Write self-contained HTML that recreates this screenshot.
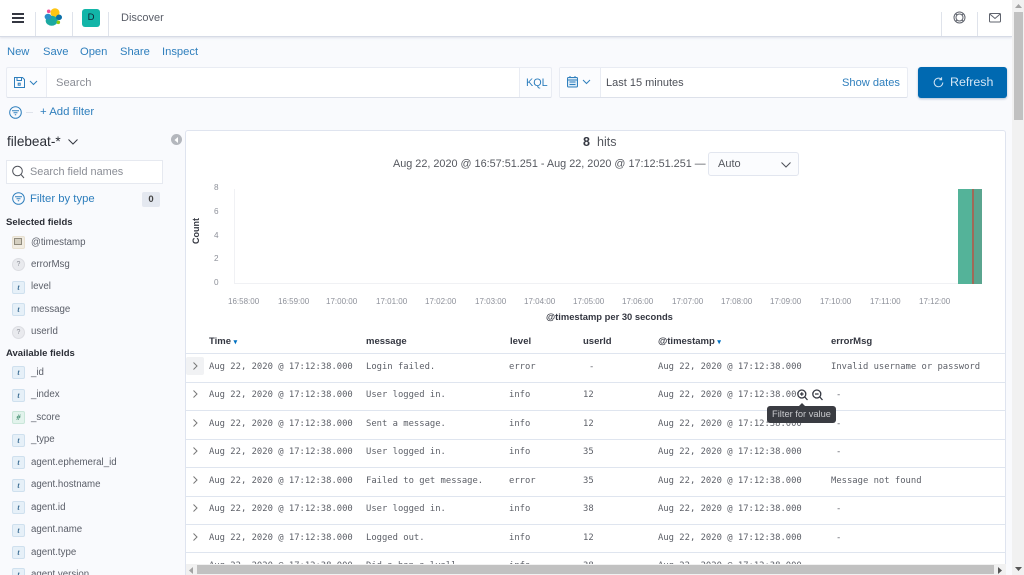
<!DOCTYPE html>
<html><head><meta charset="utf-8"><style>
html,body{margin:0;padding:0;width:1024px;height:575px;overflow:hidden;background:#f9fafd}
body{font-family:"Liberation Sans",sans-serif;color:#343741;position:relative}
.a{position:absolute}
.t{position:absolute;white-space:nowrap;line-height:14px}
.l{color:#2f7fbd;font-size:11.2px}
.f{position:absolute;left:31px;font-size:9.7px;color:#5a5e68;white-space:nowrap;line-height:12px;margin-top:1px}
.h{position:absolute;left:6px;font-size:9.5px;font-weight:bold;color:#2b2e36;line-height:12px;white-space:nowrap;margin-top:1px}
.ic{position:absolute;left:12px;width:11px;height:11px;border-radius:2px;background:#e6f0f8;border:.5px solid #cfe0ee;font:italic bold 8px/11px "Liberation Serif",serif;color:#3f6f95;text-align:center}
.ic.q{border-radius:50%;background:#e9eaee;border-color:#dcdde2;color:#8a8d96;font:7px/11px "Liberation Sans",sans-serif}
.ic.n{background:#e2f3ec;border-color:#c9e6d9;color:#3d8a6c}
.ic.d{background:#f1ece2;border-color:#e8e0d0}
.m{position:absolute;font:8.85px/12px "DejaVu Sans Mono",monospace;color:#5d6068;white-space:nowrap}
.th{position:absolute;top:336px;font-size:9.5px;font-weight:bold;color:#343741;line-height:12px;white-space:nowrap}
.rl{position:absolute;left:186px;width:820px;height:1px;background:#dfe5ef}
.x{position:absolute;font-size:8px;color:#8d9099;line-height:10px;top:297px;white-space:nowrap}
.y{position:absolute;font-size:8.2px;color:#8d9099;line-height:10px;left:214px}
svg{position:absolute;overflow:visible}
</style></head><body>

<!-- header -->
<div class="a" style="left:0;top:0;width:1012px;height:36px;background:#fff;border-bottom:1px solid #d6dbe6;box-shadow:0 1px 2px rgba(150,160,185,.25)"></div>
<div class="a" style="left:12px;top:13px;width:12px;height:1.5px;background:#343741"></div>
<div class="a" style="left:12px;top:17px;width:12px;height:1.5px;background:#343741"></div>
<div class="a" style="left:12px;top:21px;width:12px;height:1.5px;background:#343741"></div>
<div class="a" style="left:35px;top:12px;width:1px;height:24px;background:#dfe3eb"></div>
<div class="a" style="left:72px;top:12px;width:1px;height:24px;background:#dfe3eb"></div>
<div class="a" style="left:108px;top:12px;width:1px;height:24px;background:#dfe3eb"></div>
<div class="a" style="left:941px;top:12px;width:1px;height:24px;background:#dfe3eb"></div>
<div class="a" style="left:977px;top:12px;width:1px;height:24px;background:#dfe3eb"></div>
<svg style="left:44px;top:7px" width="20" height="20" viewBox="0 0 20 20">
<circle cx="11" cy="5.7" r="4.5" fill="#fec514"/><ellipse cx="7.7" cy="13.7" rx="6" ry="5" fill="#1ba9a0"/>
<ellipse cx="4" cy="9.7" rx="3.4" ry="3" fill="#2a8fc9"/><circle cx="4.7" cy="4.3" r="1.8" fill="#f04e98"/>
<ellipse cx="15" cy="10.3" rx="3" ry="2.8" fill="#0a6fa8"/><circle cx="14.3" cy="15.3" r="1.8" fill="#93c90e"/></svg>
<div class="a" style="left:82px;top:9px;width:18px;height:18px;border-radius:3px;background:#12b5a8;color:#123;font-size:9.5px;line-height:18px;text-align:center">D</div>
<div class="t" style="left:121px;top:11px;font-size:11px;color:#5a5e68">Discover</div>
<svg style="left:953px;top:11px" width="13" height="13" viewBox="0 0 13 13" fill="none" stroke="#5f636d" stroke-width="1"><circle cx="6.5" cy="6.5" r="5.5"/><circle cx="6.5" cy="6.5" r="3.5"/><path d="M2.5 2.5l1.6 1.6M10.5 2.5L8.9 4.1M2.5 10.5l1.6-1.6M10.5 10.5L8.9 8.9"/></svg>
<svg style="left:989px;top:13px" width="12" height="10" viewBox="0 0 12 10" fill="none" stroke="#5f636d" stroke-width="1"><rect x=".5" y=".5" width="11" height="8.5" rx="1"/><path d="M.8 1l5.2 4.5L11.2 1"/></svg>

<!-- scrollbar -->
<div class="a" style="left:1012px;top:0;width:12px;height:575px;background:#f1f1f1"></div>
<div class="a" style="left:1014px;top:12px;width:9px;height:108px;background:#c1c1c1"></div>
<svg style="left:1015px;top:4px" width="7" height="4"><path d="M3.5 0L7 4H0z" fill="#a3a3a3"/></svg>
<svg style="left:1015px;top:567px" width="7" height="4"><path d="M0 0h7L3.5 4z" fill="#555"/></svg>

<!-- top menu -->
<div class="t l" style="left:7px;top:45px">New</div>
<div class="t l" style="left:43px;top:45px">Save</div>
<div class="t l" style="left:80px;top:45px">Open</div>
<div class="t l" style="left:120px;top:45px">Share</div>
<div class="t l" style="left:162px;top:45px">Inspect</div>

<!-- search -->
<div class="a" style="left:6px;top:67px;width:546px;height:31px;box-sizing:border-box;background:#fbfcfe;border:1px solid #e9ecf3;border-bottom:1px solid #dde1ea;border-radius:2px"></div>
<div class="a" style="left:46px;top:68px;width:474px;height:29px;background:#fff;border-left:1px solid #e9ecf3;border-right:1px solid #e9ecf3;box-sizing:border-box"></div>
<svg style="left:14px;top:76px" width="26" height="13" viewBox="0 0 26 13" fill="none" stroke="#2f7fbd"><path d="M.5 1.5h8l2 2v8h-10zM3 1.5v3h4.5v-3"/><rect x="4.2" y="7.2" width="2" height="2"/><path d="M16 5l3.5 3.5L23 5" stroke-width="1"/></svg>
<div class="t" style="left:56px;top:76px;font-size:11.2px;color:#8a8d95">Search</div>
<div class="t l" style="left:526px;top:76px;font-size:10.8px">KQL</div>

<div class="a" style="left:559px;top:67px;width:349px;height:31px;box-sizing:border-box;background:#fff;border:1px solid #e9ecf3;border-bottom:1px solid #dde1ea;border-radius:2px"></div>
<div class="a" style="left:560px;top:68px;width:40px;height:29px;background:#fbfcfe;border-right:1px solid #e9ecf3"></div>
<svg style="left:567px;top:76px" width="26" height="12" viewBox="0 0 26 12" fill="none" stroke="#2f7fbd"><rect x=".5" y="1.5" width="10" height="9.5" rx="1" fill="#dcebf6"/><path d="M.5 4h10M3 0v2M8 0v2M2.5 6h6M2.5 8.5h6"/><path d="M16 4l3.5 3.5L23 4"/></svg>
<div class="t" style="left:606px;top:76px;font-size:11px;color:#4d5058">Last 15 minutes</div>
<div class="t l" style="left:842px;top:76px;font-size:11.1px">Show dates</div>

<div class="a" style="left:918px;top:67px;width:89px;height:31px;border-radius:3px;background:#0069b1;box-shadow:0 1px 2px rgba(0,60,120,.3)"></div>
<svg style="left:933px;top:77px" width="11" height="11" viewBox="0 0 11 11" fill="none" stroke="#cfe3f3" stroke-width="1"><path d="M9.8 5.5a4.3 4.3 0 1 1-1.5-3.3M8.6.3v2.4H6.3"/></svg>
<div class="t" style="left:950px;top:75px;font-size:12.4px;color:#d4e6f4">Refresh</div>

<!-- filter -->
<svg style="left:9px;top:106px" width="13" height="13" viewBox="0 0 13 13" fill="none" stroke="#2f7fbd"><circle cx="6.5" cy="6.5" r="5.8"/><path d="M3 4.8h7M4.5 6.8h4M5.8 8.8h1.4"/></svg>
<div class="a" style="left:26px;top:112px;width:7px;height:1px;background:#dfe3eb"></div>
<div class="t l" style="left:40px;top:105px;font-size:11.4px">+ Add filter</div>

<!-- sidebar -->
<div class="t" style="left:7px;top:135px;font-size:13.6px;color:#2b2e36">filebeat-*</div>
<svg style="left:68px;top:139px" width="10" height="6" fill="none" stroke="#343741"><path d="M.5.5L5 5 9.5.5"/></svg>
<div class="a" style="left:171px;top:134px;width:11px;height:11px;border-radius:50%;background:#b4b7bd"></div>
<svg style="left:174px;top:136.5px" width="5" height="6"><path d="M4 0v6L.5 3z" fill="#fff"/></svg>
<div class="a" style="left:6px;top:160px;width:157px;height:24px;box-sizing:border-box;background:#fff;border:1px solid #e6e9f0"></div>
<svg style="left:12px;top:165px" width="13" height="14" fill="none" stroke="#50535b" stroke-width="1"><circle cx="5.5" cy="6" r="4.8"/><path d="M9 9.5l3 3.5"/></svg>
<div class="t" style="left:30px;top:165px;font-size:10.9px;color:#8a8d95">Search field names</div>
<svg style="left:12px;top:192px" width="13" height="13" viewBox="0 0 13 13" fill="none" stroke="#2f7fbd"><circle cx="6.5" cy="6.5" r="5.8"/><path d="M3 4.8h7M4.5 6.8h4M5.8 8.8h1.4"/></svg>
<div class="t l" style="left:30px;top:192px;font-size:11.3px">Filter by type</div>
<div class="a" style="left:142px;top:192px;width:18px;height:15px;background:#e4e8f0;border-radius:2px;font-size:9.5px;font-weight:bold;line-height:15px;text-align:center;color:#444">0</div>

<div class="h" style="top:216px">Selected fields</div>
<div class="ic d" style="top:236px"></div><div class="a" style="left:14px;top:238px;background:#d5cfc0;border:1px solid #8f8a7c;box-sizing:border-box;width:8px;height:7px"></div><div class="f" style="top:236px">@timestamp</div>
<div class="ic q" style="top:258px">?</div><div class="f" style="top:258px">errorMsg</div>
<div class="ic" style="top:281px">t</div><div class="f" style="top:280px">level</div>
<div class="ic" style="top:303px">t</div><div class="f" style="top:303px">message</div>
<div class="ic q" style="top:326px">?</div><div class="f" style="top:325px">userId</div>
<div class="h" style="top:347px">Available fields</div>
<div class="ic" style="top:366px">t</div><div class="f" style="top:366px">_id</div>
<div class="ic" style="top:389px">t</div><div class="f" style="top:388px">_index</div>
<div class="ic n" style="top:411px">#</div><div class="f" style="top:411px">_score</div>
<div class="ic" style="top:434px">t</div><div class="f" style="top:433px">_type</div>
<div class="ic" style="top:456px">t</div><div class="f" style="top:456px">agent.ephemeral_id</div>
<div class="ic" style="top:479px">t</div><div class="f" style="top:478px">agent.hostname</div>
<div class="ic" style="top:501px">t</div><div class="f" style="top:501px">agent.id</div>
<div class="ic" style="top:524px">t</div><div class="f" style="top:523px">agent.name</div>
<div class="ic" style="top:546px">t</div><div class="f" style="top:546px">agent.type</div>
<div class="ic" style="top:568px">t</div><div class="f" style="top:568px">agent.version</div>

<!-- main panel -->
<div class="a" style="left:185px;top:130px;width:821px;height:445px;box-sizing:border-box;background:#fff;border:1px solid #dfe4ef;border-bottom:0;border-radius:3px 3px 0 0"></div>
<div class="t" style="left:583px;top:135px;font-size:12.5px;font-weight:bold;color:#343741">8</div>
<div class="t" style="left:597px;top:135px;font-size:12.5px;color:#55585f">hits</div>
<div class="t" style="left:393px;top:157px;font-size:10.85px;color:#55585f">Aug 22, 2020 @ 16:57:51.251 - Aug 22, 2020 @ 17:12:51.251 —</div>
<div class="a" style="left:708px;top:152px;width:91px;height:24px;box-sizing:border-box;background:#fbfcfe;border:1px solid #e2e6ef;border-radius:3px"></div>
<div class="t" style="left:718px;top:157px;font-size:11px;color:#55585f">Auto</div>
<svg style="left:781px;top:162px" width="10" height="6" fill="none" stroke="#4d5058"><path d="M.5.5L5 5 9.5.5"/></svg>

<!-- chart -->
<div class="t" style="left:171px;top:225px;width:50px;text-align:center;font-size:9px;font-weight:bold;transform:rotate(-90deg);color:#343741;line-height:12px">Count</div>
<div class="y" style="top:183px">8</div><div class="y" style="top:207px">6</div><div class="y" style="top:231px">4</div><div class="y" style="top:254px">2</div><div class="y" style="top:278px">0</div>
<div class="a" style="left:234px;top:189px;width:1px;height:95px;background:#f0f1f4"></div>
<div class="a" style="left:234px;top:283px;width:748px;height:1px;background:#f0f1f4"></div>
<div class="a" style="left:958px;top:189px;width:14px;height:95px;background:#54b399"></div>
<div class="a" style="left:972px;top:189px;width:2px;height:95px;background:#a06a58"></div>
<div class="a" style="left:974px;top:189px;width:8px;height:95px;background:#5aa58f"></div>
<div class="x" style="left:228px">16:58:00</div><div class="x" style="left:278px">16:59:00</div><div class="x" style="left:326px">17:00:00</div><div class="x" style="left:376px">17:01:00</div><div class="x" style="left:425px">17:02:00</div><div class="x" style="left:475px">17:03:00</div><div class="x" style="left:524px">17:04:00</div><div class="x" style="left:573px">17:05:00</div><div class="x" style="left:622px">17:06:00</div><div class="x" style="left:672px">17:07:00</div><div class="x" style="left:721px">17:08:00</div><div class="x" style="left:770px">17:09:00</div><div class="x" style="left:820px">17:10:00</div><div class="x" style="left:870px">17:11:00</div><div class="x" style="left:919px">17:12:00</div>
<div class="t" style="left:546px;top:311px;font-size:9.4px;font-weight:bold;color:#343741;line-height:12px">@timestamp per 30 seconds</div>

<!-- table -->
<div class="th" style="left:209px">Time <span style="color:#0071c2;font-size:7px">&#9662;</span></div>
<div class="th" style="left:366px">message</div>
<div class="th" style="left:510px">level</div>
<div class="th" style="left:583px">userId</div>
<div class="th" style="left:658px">@timestamp <span style="color:#0071c2;font-size:7px">&#9662;</span></div>
<div class="th" style="left:831px">errorMsg</div>
<div class="rl" style="top:353px"></div><div class="rl" style="top:382px"></div><div class="rl" style="top:410px"></div><div class="rl" style="top:439px"></div><div class="rl" style="top:467px"></div><div class="rl" style="top:496px"></div><div class="rl" style="top:524px"></div><div class="rl" style="top:552px"></div>
<div class="a" style="left:186px;top:357px;width:18px;height:18px;background:#f1f2f4;border-radius:2px"></div>
<svg style="left:193px;top:362px" width="5" height="8" fill="none" stroke="#777"><path d="M.5.5L4 4 .5 7.5"/></svg>
<svg style="left:193px;top:390px" width="5" height="8" fill="none" stroke="#777"><path d="M.5.5L4 4 .5 7.5"/></svg>
<svg style="left:193px;top:419px" width="5" height="8" fill="none" stroke="#777"><path d="M.5.5L4 4 .5 7.5"/></svg>
<svg style="left:193px;top:447px" width="5" height="8" fill="none" stroke="#777"><path d="M.5.5L4 4 .5 7.5"/></svg>
<svg style="left:193px;top:476px" width="5" height="8" fill="none" stroke="#777"><path d="M.5.5L4 4 .5 7.5"/></svg>
<svg style="left:193px;top:504px" width="5" height="8" fill="none" stroke="#777"><path d="M.5.5L4 4 .5 7.5"/></svg>
<svg style="left:193px;top:533px" width="5" height="8" fill="none" stroke="#777"><path d="M.5.5L4 4 .5 7.5"/></svg>

<div class="m" style="left:209px;top:361px">Aug 22, 2020 @ 17:12:38.000</div><div class="m" style="left:366px;top:361px">Login failed.</div><div class="m" style="left:509px;top:361px">error</div><div class="m" style="left:589px;top:361px">-</div><div class="m" style="left:658px;top:361px">Aug 22, 2020 @ 17:12:38.000</div><div class="m" style="left:831px;top:361px">Invalid username or password</div>
<div class="m" style="left:209px;top:389px">Aug 22, 2020 @ 17:12:38.000</div><div class="m" style="left:366px;top:389px">User logged in.</div><div class="m" style="left:509px;top:389px">info</div><div class="m" style="left:583px;top:389px">12</div><div class="m" style="left:658px;top:389px">Aug 22, 2020 @ 17:12:38.00</div><div class="m" style="left:836px;top:389px">-</div>
<div class="m" style="left:209px;top:418px">Aug 22, 2020 @ 17:12:38.000</div><div class="m" style="left:366px;top:418px">Sent a message.</div><div class="m" style="left:509px;top:418px">info</div><div class="m" style="left:583px;top:418px">12</div><div class="m" style="left:658px;top:418px">Aug 22, 2020 @ 17:12:38.000</div><div class="m" style="left:836px;top:418px">-</div>
<div class="m" style="left:209px;top:446px">Aug 22, 2020 @ 17:12:38.000</div><div class="m" style="left:366px;top:446px">User logged in.</div><div class="m" style="left:509px;top:446px">info</div><div class="m" style="left:583px;top:446px">35</div><div class="m" style="left:658px;top:446px">Aug 22, 2020 @ 17:12:38.000</div><div class="m" style="left:836px;top:446px">-</div>
<div class="m" style="left:209px;top:475px">Aug 22, 2020 @ 17:12:38.000</div><div class="m" style="left:366px;top:475px">Failed to get message.</div><div class="m" style="left:509px;top:475px">error</div><div class="m" style="left:583px;top:475px">35</div><div class="m" style="left:658px;top:475px">Aug 22, 2020 @ 17:12:38.000</div><div class="m" style="left:831px;top:475px">Message not found</div>
<div class="m" style="left:209px;top:503px">Aug 22, 2020 @ 17:12:38.000</div><div class="m" style="left:366px;top:503px">User logged in.</div><div class="m" style="left:509px;top:503px">info</div><div class="m" style="left:583px;top:503px">38</div><div class="m" style="left:658px;top:503px">Aug 22, 2020 @ 17:12:38.000</div><div class="m" style="left:836px;top:503px">-</div>
<div class="m" style="left:209px;top:532px">Aug 22, 2020 @ 17:12:38.000</div><div class="m" style="left:366px;top:532px">Logged out.</div><div class="m" style="left:509px;top:532px">info</div><div class="m" style="left:583px;top:532px">12</div><div class="m" style="left:658px;top:532px">Aug 22, 2020 @ 17:12:38.000</div><div class="m" style="left:836px;top:532px">-</div>
<div class="m" style="left:209px;top:560px">Aug 22, 2020 @ 17:12:38.000</div><div class="m" style="left:366px;top:560px">Did a ban-a-lyall</div><div class="m" style="left:509px;top:560px">info</div><div class="m" style="left:583px;top:560px">38</div><div class="m" style="left:658px;top:560px">Aug 22, 2020 @ 17:12:38.000</div>

<!-- hover icons / tooltip -->
<div class="a" style="left:796px;top:388px;width:12px;height:14px;background:#fff"></div>
<svg style="left:797px;top:389px" width="11" height="12" fill="none" stroke="#343741" stroke-width="1.3"><circle cx="4.8" cy="5" r="4"/><path d="M7.8 8l2.7 3M3 5h3.6M4.8 3.2v3.6"/></svg>
<svg style="left:812px;top:389px" width="11" height="12" fill="none" stroke="#343741" stroke-width="1.3"><circle cx="4.8" cy="5" r="4"/><path d="M7.8 8l2.7 3M3 5h3.6"/></svg>
<div class="a" style="left:767px;top:406px;width:69px;height:17px;background:#3a3c42;border-radius:3px;color:#c9cacd;font-size:9.3px;line-height:17px;text-align:center">Filter for value</div>
<div class="a" style="left:799px;top:403px;width:0;height:0;border-left:3px solid transparent;border-right:3px solid transparent;border-bottom:3px solid #3a3c42"></div>

<!-- horizontal scrollbar -->
<div class="a" style="left:186px;top:564px;width:820px;height:11px;background:#f1f1f1"></div>
<div class="a" style="left:197px;top:565px;width:797px;height:9px;background:#c1c1c1"></div>
<svg style="left:189px;top:567px" width="4" height="7"><path d="M4 0v7L0 3.5z" fill="#a3a3a3"/></svg>
<svg style="left:998px;top:567px" width="4" height="7"><path d="M0 0v7l4-3.5z" fill="#555"/></svg>
</body></html>
